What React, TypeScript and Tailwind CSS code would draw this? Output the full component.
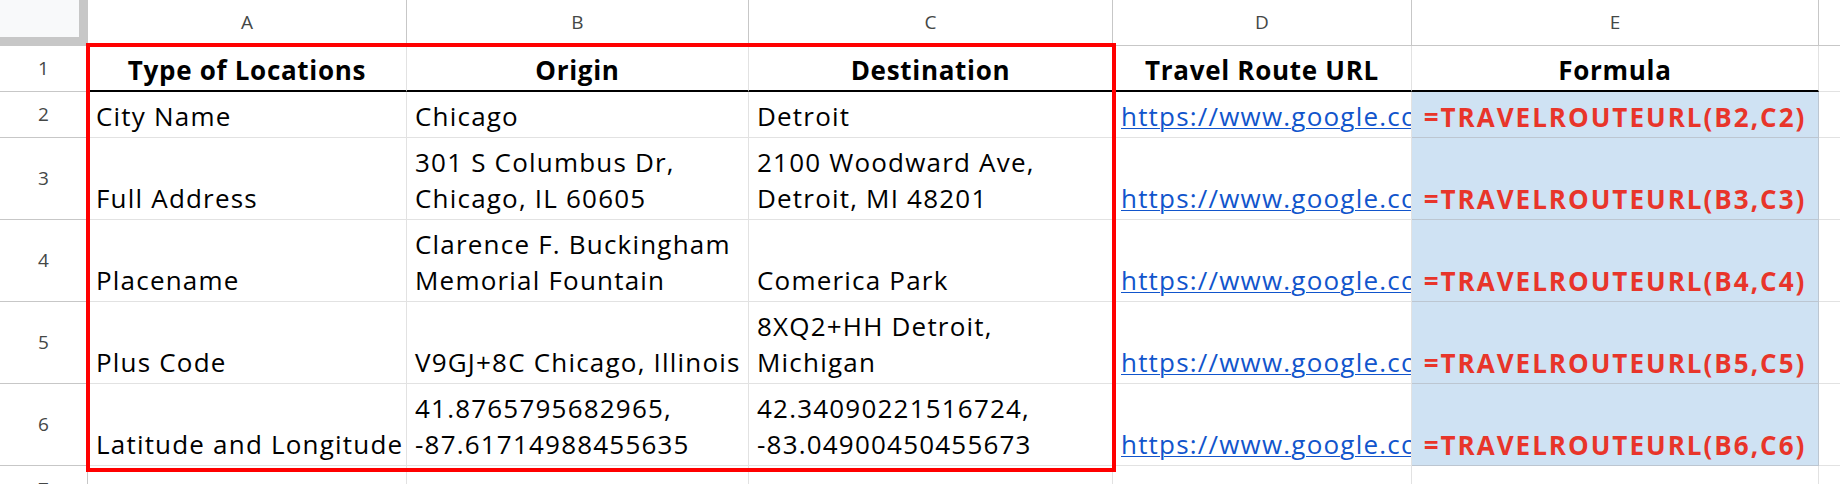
import React from "react";

const COLS = ["A", "B", "C", "D", "E"];
const URL = "https://www.google.com/maps/dir/?api=1";

type Row = { n: number; h: string; a: string[]; b: string[]; c: string[] };

const ROWS: Row[] = [
  { n: 2, h: "h-[46px]", a: ["City Name"], b: ["Chicago"], c: ["Detroit"] },
  {
    n: 3,
    h: "h-[82px]",
    a: ["Full Address"],
    b: ["301 S Columbus Dr,", "Chicago, IL 60605"],
    c: ["2100 Woodward Ave,", "Detroit, MI 48201"],
  },
  {
    n: 4,
    h: "h-[82px]",
    a: ["Placename"],
    b: ["Clarence F. Buckingham", "Memorial Fountain"],
    c: ["Comerica Park"],
  },
  {
    n: 5,
    h: "h-[82px]",
    a: ["Plus Code"],
    b: ["V9GJ+8C Chicago, Illinois"],
    c: ["8XQ2+HH Detroit,", "Michigan"],
  },
  {
    n: 6,
    h: "h-[82px]",
    a: ["Latitude and Longitude"],
    b: ["41.8765795682965,", "-87.61714988455635"],
    c: ["42.34090221516724,", "-83.04900450455673"],
  },
];

const cell =
  "flex flex-col justify-end overflow-hidden whitespace-nowrap border-r border-b border-[#e2e2e2] px-2 pb-[3px] leading-[36px] tracking-[1.2px]";

const Lines = ({ lines }: { lines: string[] }) => (
  <>
    {lines.map((l) => (
      <span key={l}>{l}</span>
    ))}
  </>
);

const HEADERS = ["Type of Locations", "Origin", "Destination", "Travel Route URL", "Formula"];

export default function App() {
  return (
    <div className="relative h-[484px] w-[1840px] overflow-hidden bg-white font-['Open_Sans','Noto_Sans',sans-serif] text-[26px] text-black">
      <div className="grid grid-cols-[88px_319px_342px_364px_299px_407px_1fr]">
        {/* column letters */}
        <div className="h-[46px] border-r-[9px] border-b-[9px] border-[#c7c7c7] bg-[#f8f9fa]" />
        {COLS.map((c) => (
          <div
            key={c}
            className="flex h-[46px] items-center justify-center border-r border-b border-[#c7c7c7] text-[19px] text-[#444746]"
          >
            {c}
          </div>
        ))}
        <div className="h-[46px] border-b border-[#c7c7c7]" />

        {/* row 1 headers */}
        <div className="flex h-[46px] items-center justify-center border-r border-b border-[#c7c7c7] text-[19px] text-[#444746]">
          1
        </div>
        {HEADERS.map((t) => (
          <div
            key={t}
            className="flex h-[46px] flex-col items-center justify-end overflow-hidden whitespace-nowrap border-r border-b-2 border-r-[#e2e2e2] border-b-black pb-[2px] font-bold leading-[36px] tracking-[0.7px]"
          >
            {t}
          </div>
        ))}
        <div className="h-[46px] border-b border-[#e2e2e2]" />

        {ROWS.map((r) => (
          <React.Fragment key={r.n}>
            <div
              className={`flex ${r.h} items-center justify-center border-r border-b border-[#c7c7c7] text-[19px] text-[#444746]`}
            >
              {r.n}
            </div>
            <div className={`${cell} ${r.h}`}>
              <Lines lines={r.a} />
            </div>
            <div className={`${cell} ${r.h}`}>
              <Lines lines={r.b} />
            </div>
            <div className={`${cell} ${r.h}`}>
              <Lines lines={r.c} />
            </div>
            <div className={`${cell} ${r.h} pr-0`}>
              <a
                href={URL}
                className="block w-full overflow-hidden text-clip text-[#1155cc] underline decoration-1 underline-offset-2"
              >
                {URL}
              </a>
            </div>
            <div
              className={`flex ${r.h} flex-col items-center justify-end overflow-hidden whitespace-nowrap border-r border-b border-[#bcc6d1] bg-[#cfe2f3] pb-[2px] font-bold leading-[36px] tracking-[2px] text-[#e8352a]`}
            >
              =TRAVELROUTEURL(B{r.n},C{r.n})
            </div>
            <div className={`${r.h} border-b border-[#e2e2e2]`} />
          </React.Fragment>
        ))}

        {/* row 7 */}
        <div className="flex h-[46px] items-center justify-center border-r border-[#c7c7c7] text-[19px] text-[#444746]">
          7
        </div>
        {COLS.map((c) => (
          <div key={c} className="h-[46px] border-r border-[#e2e2e2]" />
        ))}
        <div className="h-[46px]" />
      </div>

      {/* selection frame */}
      <div className="pointer-events-none absolute left-[86px] top-[43px] h-[429px] w-[1030px] border-4 border-[#ff0000]" />
    </div>
  );
}
